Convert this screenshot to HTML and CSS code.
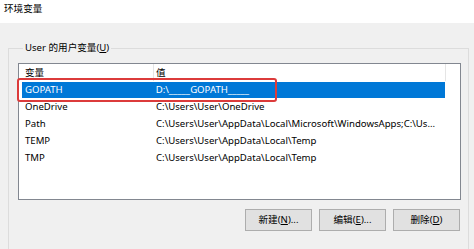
FILE: index.html
```html
<!DOCTYPE html>
<html>
<head>
<meta charset="utf-8">
<link rel="stylesheet" href="styles.css">
</head>
<body>
<div class="window">
  <div class="titlebar">环境变量</div>
  <div class="body">
    <div class="group">
      <div class="group-label">User 的用户变量(<u>U</u>)</div>
      <div class="list">
        <div class="row head">
          <div class="c1">变量</div>
          <div class="c2">值</div>
        </div>
        <div class="row sel">
          <div class="c1">GOPATH</div>
          <div class="c2">D:\_____GOPATH_____</div>
        </div>
        <div class="row">
          <div class="c1">OneDrive</div>
          <div class="c2">C:\Users\User\OneDrive</div>
        </div>
        <div class="row">
          <div class="c1">Path</div>
          <div class="c2">C:\Users\User\AppData\Local\Microsoft\WindowsApps;C:\Us...</div>
        </div>
        <div class="row">
          <div class="c1">TEMP</div>
          <div class="c2">C:\Users\User\AppData\Local\Temp</div>
        </div>
        <div class="row">
          <div class="c1">TMP</div>
          <div class="c2">C:\Users\User\AppData\Local\Temp</div>
        </div>
        <div class="highlight"></div>
      </div>
      <div class="buttons">
        <button class="btn">新建(<u>N</u>)...</button>
        <button class="btn">编辑(<u>E</u>)...</button>
        <button class="btn">删除(<u>D</u>)</button>
      </div>
    </div>
  </div>
</div>
</body>
</html>
```
FILE: styles.css
```css
html, body {
  margin: 0;
  padding: 0;
}
body {
  width: 474px;
  height: 249px;
  overflow: hidden;
  background: #f0f0f0;
  font-family: "Noto Sans", "Noto Sans CJK SC", sans-serif;
  font-size: 9.6px;
  color: #000;
}
.window {
  height: 249px;
  display: flex;
  flex-direction: column;
}
.titlebar {
  height: 23px;
  flex: none;
  background: #fff;
  padding-left: 4px;
  line-height: 18px;
  box-sizing: border-box;
}
.body {
  flex: 1;
  min-height: 0;
  padding: 25px 5px 0 8px;
}
.group {
  height: 100%;
  box-sizing: border-box;
  border: 1px solid #dcdcdc;
  border-bottom: none;
  padding: 0 7px 0 9px;
}
.group-label {
  width: fit-content;
  margin: -8px 0 0 5px;
  padding: 0 2px;
  height: 14px;
  line-height: 14px;
  background: #f0f0f0;
}
.list {
  position: relative;
  margin-top: 8px;
  background: #fff;
  border: 1px solid #828790;
  height: 137px;
  box-sizing: border-box;
}
.row {
  display: flex;
  height: 17px;
  line-height: 17px;
  white-space: nowrap;
}
.row .c1 {
  width: 135px;
  padding-left: 6px;
  box-sizing: border-box;
}
.row .c2 {
  width: 292px;
  padding-left: 2px;
  box-sizing: border-box;
  overflow: hidden;
}
.head .c1 {
  width: 135px;
  border-right: 1px solid #e5e5e5;
}
.head .c2 {
  border-right: 1px solid #e5e5e5;
}
.sel {
  height: 16px;
  line-height: 16px;
  margin: 1px 0 0 3px;
  width: 423px;
  background: #0078d7;
  color: #fff;
}
.sel .c1 {
  width: 132px;
  padding-left: 3px;
}
.highlight {
  position: absolute;
  left: -2px;
  top: 14px;
  width: 260px;
  height: 24px;
  box-sizing: border-box;
  border: 2px solid #dc3b3b;
  border-radius: 3px;
}
.buttons {
  display: flex;
  justify-content: flex-end;
  gap: 7px;
  margin-top: 9px;
  padding-right: 1px;
}
.btn {
  width: 67px;
  height: 22px;
  background: #e1e1e1;
  border: 1px solid #adadad;
  font-family: "Noto Sans", "Noto Sans CJK SC", sans-serif;
  font-size: 9.6px;
  color: #000;
  padding: 0;
  margin: 0;
  line-height: 18px;
}
```
